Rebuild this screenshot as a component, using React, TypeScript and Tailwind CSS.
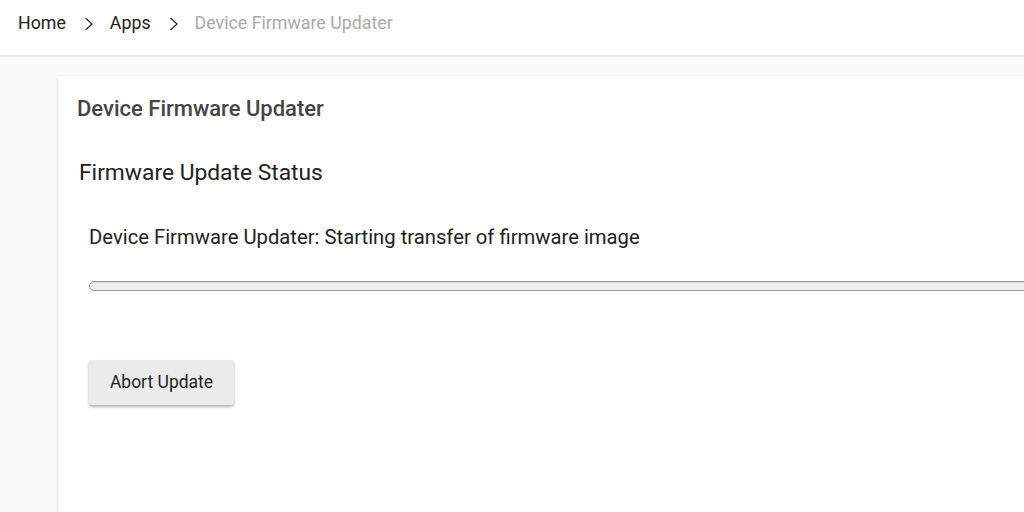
const crumbs = ["Home", "Apps"];

function Chevron() {
  return (
    <svg width="10" height="14" viewBox="0 0 10 14" className="ml-[18px] mr-[16px] mt-[1px] text-[#333]">
      <polyline points="1.5,1 8,7 1.5,13" fill="none" stroke="currentColor" strokeWidth="1.4" />
    </svg>
  );
}

export default function App() {
  return (
    <div className="h-[512px] w-[1024px] overflow-hidden bg-[#fafafa] font-['Roboto',sans-serif]">
      <header className="flex h-[57px] items-start border-b-2 border-[#e8e8ec] bg-white pl-[18px] pt-[12px] text-[17.8px] leading-[22px]">
        {crumbs.map((c) => (
          <div key={c} className="flex items-center">
            <span className="text-[#222]">{c}</span>
            <Chevron />
          </div>
        ))}
        <span className="text-[#aaa]">Device Firmware Updater</span>
      </header>

      <div className="pl-[58px] pt-[19px]">
        <section className="h-[460px] w-[1000px] rounded-tl-[3px] bg-white shadow-[0_1px_3px_rgba(0,0,0,0.2)]">
          <h1 className="pl-[19px] pt-[19px] text-[22px] font-medium leading-[28px] text-[#454545]">
            Device Firmware Updater
          </h1>
          <h2 className="pl-[21px] pt-[35px] text-[22.8px] leading-[30px] text-[#222]">
            Firmware Update Status
          </h2>
          <p className="pl-[31px] pt-[36px] text-[20.25px] leading-[26px] text-[#222]">
            Device Firmware Updater: Starting transfer of firmware image
          </p>
          <div className="pl-[31px] pt-[31px]">
            <div className="h-[10px] w-[980px] rounded-[5px] border border-[#999] bg-[#efefef] shadow-[inset_0_1px_1px_rgba(0,0,0,0.1)]" />
          </div>
          <div className="pl-[31px] pt-[69px]">
            <button className="h-[45px] w-[145px] rounded-[3px] bg-[#ebebeb] text-[17.5px] text-[#222] shadow-[0_2px_3px_rgba(0,0,0,0.3)]">
              Abort Update
            </button>
          </div>
        </section>
      </div>
    </div>
  );
}
